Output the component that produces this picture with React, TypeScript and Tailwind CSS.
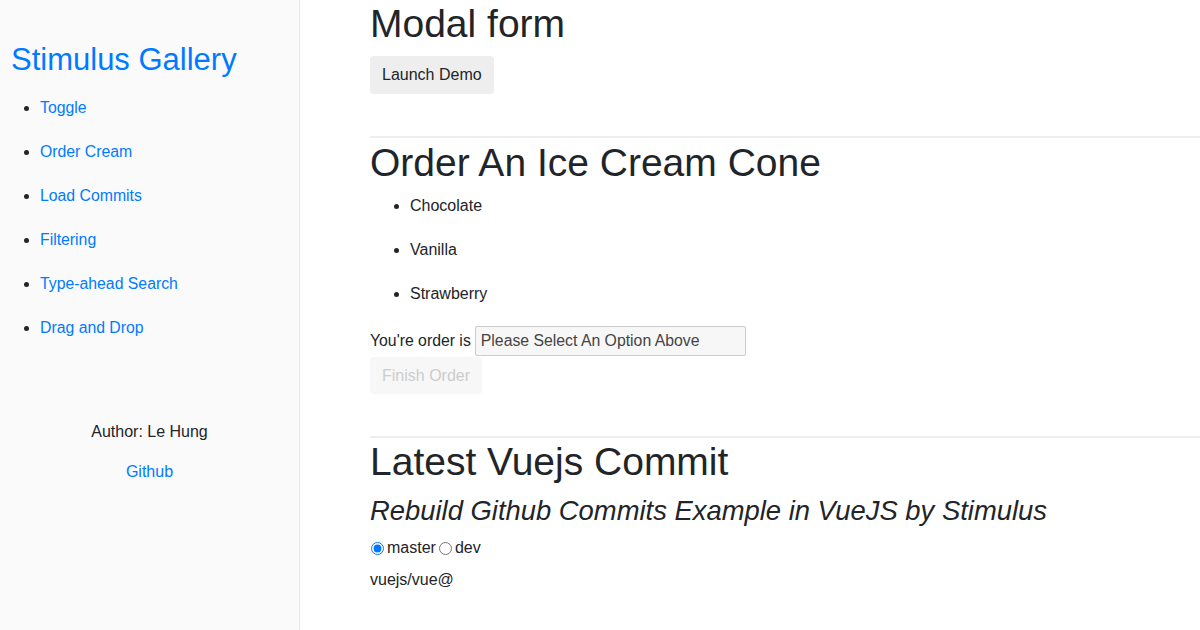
import { useState } from "react";

const links = [
  "Toggle",
  "Order Cream",
  "Load Commits",
  "Filtering",
  "Type-ahead Search",
  "Drag and Drop",
];

const flavors = ["Chocolate", "Vanilla", "Strawberry"];

function Sidebar() {
  return (
    <aside className="w-[300px] shrink-0 min-h-[630px] bg-[#fafafa] border-r border-[#e6e6e6]">
      <h2 className="pt-[41px] pl-[11px] mb-2 text-[31px] leading-[1.2] text-[#007bff]">
        Stimulus Gallery
      </h2>
      <ul className="list-disc pl-10">
        {links.map((l) => (
          <li key={l} className="py-[10px] leading-6 marker:text-[#212529]">
            <a href="#" className="text-[#007bff] text-[15.8px]">
              {l}
            </a>
          </li>
        ))}
      </ul>
      <div className="mt-[70px] text-center leading-6">
        <p className="mb-4 text-[#212529]">Author: Le Hung</p>
        <a href="#" className="text-[#007bff]">
          Github
        </a>
      </div>
    </aside>
  );
}

function App() {
  const [branch, setBranch] = useState("master");
  const [order, setOrder] = useState("");

  return (
    <div
      className="flex w-[1200px] h-[630px] overflow-hidden bg-white text-base text-[#212529]"
      style={{ fontFamily: '"Liberation Sans", Arial, sans-serif' }}
    >
      <Sidebar />
      <main className="flex-1 pl-[70px]">
        <h1 className="text-[39px] leading-[48px] mb-2">Modal form</h1>
        <button className="h-[38px] px-3 rounded bg-[#eeeeee] leading-6">
          Launch Demo
        </button>

        <hr className="mt-[42px] h-[2px] border-0 bg-[#eeeeee]" />
        <h1 className="mt-px text-[39px] leading-[48px] mb-[7px]">
          Order An Ice Cream Cone
        </h1>
        <ul className="list-disc pl-10">
          {flavors.map((f) => (
            <li
              key={f}
              className="mb-5 leading-6 cursor-pointer"
              onClick={() => setOrder(f)}
            >
              {f}
            </li>
          ))}
        </ul>
        <div className="flex items-center">
          <span className="leading-6 text-[15.8px]">You're order is</span>
          <input
            readOnly
            value={order}
            placeholder="Please Select An Option Above"
            className="ml-1 w-[271px] h-[30px] px-[5px] bg-[#f7f7f7] border border-[#cccccc] rounded-[2px] text-[15.8px] text-[#444] placeholder:text-[#444] outline-none"
          />
        </div>
        <button
          disabled
          className="mt-px h-[37px] px-3 rounded bg-[#f7f7f7] text-[#cccccc] leading-6"
        >
          Finish Order
        </button>

        <hr className="mt-[42px] h-[2px] border-0 bg-[#eeeeee]" />
        <h1 className="text-[39px] leading-[48px] mb-2">Latest Vuejs Commit</h1>
        <h3 className="italic text-[27.4px] leading-[34px] mb-2">
          Rebuild Github Commits Example in VueJS by Stimulus
        </h3>
        <div className="flex items-center leading-6">
          <input
            type="radio"
            name="branch"
            checked={branch === "master"}
            onChange={() => setBranch("master")}
            className="m-0 ml-px mr-[3px] w-[13px] h-[13px] accent-[#0075ff]"
          />
          <label>master</label>
          <input
            type="radio"
            name="branch"
            checked={branch === "dev"}
            onChange={() => setBranch("dev")}
            className="m-0 ml-[3px] mr-[3px] w-[13px] h-[13px]"
          />
          <label>dev</label>
        </div>
        <p className="mt-2 leading-6">vuejs/vue@</p>
      </main>
    </div>
  );
}

export default App;
